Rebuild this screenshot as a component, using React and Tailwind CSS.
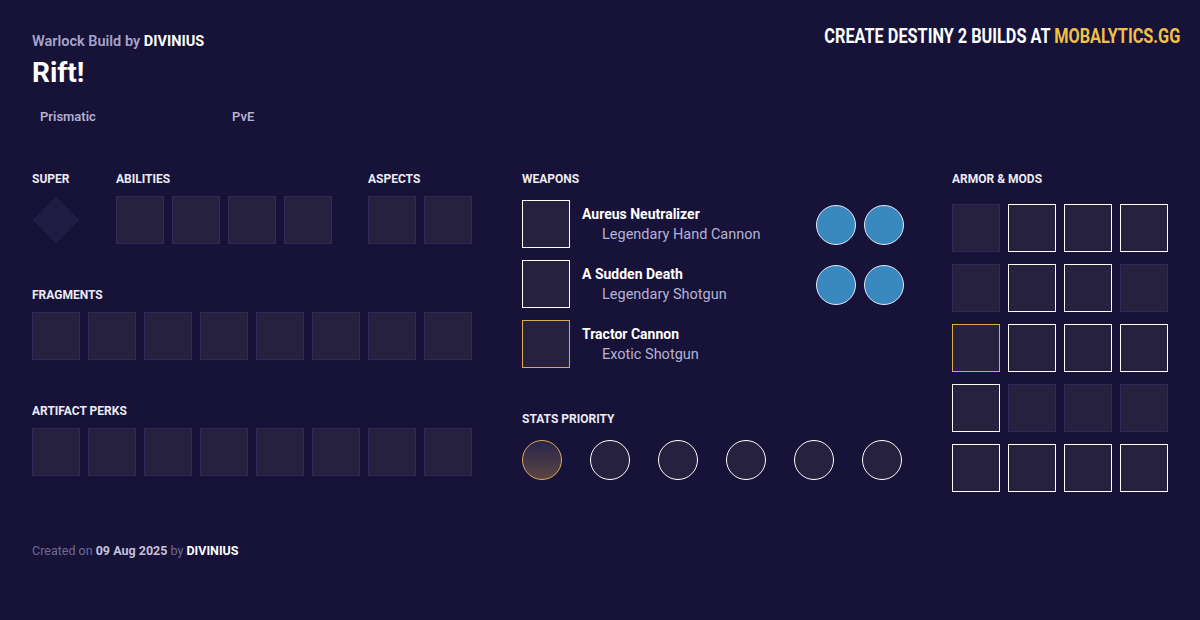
import React from 'react';

const FONT = { fontFamily: 'Roboto, "Liberation Sans", sans-serif' };

const Slot = ({ tone = 'empty' }) => {
  const border =
    tone === 'white' ? 'border-white' : tone === 'gold' ? 'border-[#e2a955]' : 'border-[#302a58]';
  return <div className={`w-12 h-12 shrink-0 bg-[#25213f] border ${border}`} />;
};

const Label = ({ children }) => (
  <div className="text-xs leading-4 font-bold uppercase text-[#ecebf3]">{children}</div>
);

const weapons = [
  { name: 'Aureus Neutralizer', type: 'Legendary Hand Cannon', tone: 'white', mods: 2 },
  { name: 'A Sudden Death', type: 'Legendary Shotgun', tone: 'white', mods: 2 },
  { name: 'Tractor Cannon', type: 'Exotic Shotgun', tone: 'gold', mods: 0 },
];

const armor = [
  ['empty', 'white', 'white', 'white'],
  ['empty', 'white', 'white', 'empty'],
  ['gold', 'white', 'white', 'white'],
  ['white', 'empty', 'empty', 'empty'],
  ['white', 'white', 'white', 'white'],
];

export default function App() {
  return (
    <div className="w-[1200px] h-[620px] bg-[#161238] overflow-hidden px-8 pt-8" style={FONT}>
      {/* header */}
      <div className="flex justify-between">
        <div>
          <div className="text-[14.5px] leading-5 font-semibold text-[#a7a3c6]">
            Warlock Build by <span className="font-bold text-white">DIVINIUS</span>
          </div>
          <div className="mt-[5px] text-[28px] leading-8 font-bold text-white">Rift!</div>
          <div className="mt-5 flex text-[13px] leading-4 font-semibold text-[#b3afcf]">
            <div className="w-[200px] pl-2">Prismatic</div>
            <div>PvE</div>
          </div>
        </div>
        <div className="-mt-[10px] mr-[-12px] whitespace-nowrap">
          <div className="origin-right scale-x-[0.775] text-[21px] leading-7 font-bold uppercase text-white">
            Create Destiny 2 builds at <span className="text-[#f2c046]">mobalytics.gg</span>
          </div>
        </div>
      </div>

      {/* main */}
      <div className="mt-[46px] flex">
        {/* left column */}
        <div className="w-[440px] mr-[50px]">
          <div className="flex">
            <div className="w-[84px]">
              <Label>Super</Label>
              <div className="mt-[9px] w-12 h-12 flex items-center justify-center">
                <div className="w-[32px] h-[32px] rotate-45 bg-[#1f1b43] border border-[#242049]" />
              </div>
            </div>
            <div className="w-[252px]">
              <Label>Abilities</Label>
              <div className="mt-[9px] flex gap-2">
                {[0, 1, 2, 3].map((i) => (
                  <Slot key={i} />
                ))}
              </div>
            </div>
            <div>
              <Label>Aspects</Label>
              <div className="mt-[9px] flex gap-2">
                <Slot />
                <Slot />
              </div>
            </div>
          </div>

          <div className="mt-[43px]">
            <Label>Fragments</Label>
            <div className="mt-[9px] flex gap-2">
              {[0, 1, 2, 3, 4, 5, 6, 7].map((i) => (
                <Slot key={i} />
              ))}
            </div>
          </div>

          <div className="mt-[43px]">
            <Label>Artifact Perks</Label>
            <div className="mt-[9px] flex gap-2">
              {[0, 1, 2, 3, 4, 5, 6, 7].map((i) => (
                <Slot key={i} />
              ))}
            </div>
          </div>
        </div>

        {/* middle column */}
        <div className="w-[382px] mr-[48px]">
          <Label>Weapons</Label>
          <div className="mt-[13px] flex flex-col gap-3">
            {weapons.map((w) => (
              <div key={w.name} className="flex items-start">
                <Slot tone={w.tone} />
                <div className="ml-3 mt-[6px] flex-1">
                  <div className="text-sm leading-4 font-bold text-white">{w.name}</div>
                  <div className="mt-[3px] pl-5 text-[14.5px] leading-5 text-[#b6b2d4]">{w.type}</div>
                </div>
                <div className="mt-[5px] flex gap-2">
                  {Array.from({ length: w.mods }).map((_, i) => (
                    <div key={i} className="w-10 h-10 rounded-full bg-[#3a88c0] border border-[#dfe8f4]" />
                  ))}
                </div>
              </div>
            ))}
          </div>

          <div className="mt-[43px]">
            <Label>Stats Priority</Label>
            <div className="mt-[13px] w-[380px] flex justify-between">
              <div className="w-10 h-10 rounded-full border border-[#e2a955] bg-gradient-to-b from-[#29244a] to-[#5b4541]" />
              {[0, 1, 2, 3, 4].map((i) => (
                <div key={i} className="w-10 h-10 rounded-full border border-white bg-[#25213f]" />
              ))}
            </div>
          </div>
        </div>

        {/* right column */}
        <div>
          <Label>Armor &amp; Mods</Label>
          <div className="mt-[17px] flex flex-col gap-3">
            {armor.map((row, r) => (
              <div key={r} className="flex gap-2">
                {row.map((t, c) => (
                  <Slot key={c} tone={t} />
                ))}
              </div>
            ))}
          </div>
        </div>
      </div>

      {/* footer */}
      <div className="mt-[51px] text-[12.5px] leading-4 text-[#6f6b93]">
        Created on <span className="font-bold text-[#c4c1dc]">09 Aug 2025</span> by{' '}
        <span className="font-bold text-white">DIVINIUS</span>
      </div>
    </div>
  );
}
